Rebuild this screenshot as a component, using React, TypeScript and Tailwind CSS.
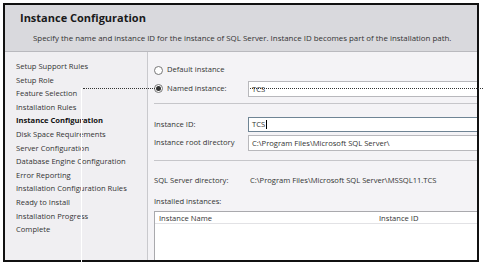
export default function App() {
  const steps = [
    'Setup Support Rules',
    'Setup Role',
    'Feature Selection',
    'Installation Rules',
    'Instance Configuration',
    'Disk Space Requirements',
    'Server Configuration',
    'Database Engine Configuration',
    'Error Reporting',
    'Installation Configuration Rules',
    'Ready to Install',
    'Installation Progress',
    'Complete',
  ]

  return (
    <div className="relative w-[483px] h-[272px] bg-white overflow-hidden text-[#222] font-['Open_Sans',sans-serif]">
      <div className="absolute left-[3px] top-[3px] w-[476px] h-[259px] border-2 border-[#111] flex flex-col bg-[#f2f1f4] overflow-hidden">
        <div className="h-[47px] shrink-0 bg-[#d9d9dd] border-b border-[#b9b9be] pl-[15px] pt-[5px]">
          <div className="text-[11px] font-bold leading-[16px] text-[#1a1a1a]">Instance Configuration</div>
          <div className="text-[7.9px] leading-[12px] mt-[6px] pl-[13px] text-[#333]">
            Specify the name and instance ID for the instance of SQL Server. Instance ID becomes part of the installation path.
          </div>
        </div>
        <div className="flex flex-1 min-h-0">
          <div className="w-[143px] shrink-0 border-r border-[#c9c9cd] bg-[#f0eff2] pl-[11px] pt-[8px] flex flex-col">
            {steps.map((s) => (
              <div
                key={s}
                className={`text-[7.6px] leading-[13.6px] ${s === 'Instance Configuration' ? 'font-bold text-[#111]' : 'text-[#333]'}`}
              >
                {s}
              </div>
            ))}
          </div>
          <div className="flex-1 min-w-0 flex flex-col bg-[#f4f3f6] pl-[6px] pt-[11px] text-[7.6px] text-[#333]">
            <div className="flex items-center gap-[4px] h-[14px]">
              <span className="w-[9px] h-[9px] rounded-full border border-[#777] bg-white" />
              <span>Default instance</span>
            </div>
            <div className="flex items-center h-[17px] mt-[3px]">
              <div className="w-[94px] flex items-center gap-[4px]">
                <span className="w-[9px] h-[9px] rounded-full border border-[#777] bg-white flex items-center justify-center">
                  <span className="w-[5px] h-[5px] rounded-full bg-[#333]" />
                </span>
                <span>Named instance:</span>
              </div>
              <div className="flex-1 h-[16px] border border-[#b8b8bc] border-r-0 bg-white pl-[3px] leading-[14px]">TCS</div>
            </div>
            <div className="border-t border-[#c6c6ca] mt-[6px]" />
            <div className="flex items-center h-[15px] mt-[13px]">
              <div className="w-[94px]">Instance ID:</div>
              <div className="flex-1 h-[15px] border border-[#6f8494] border-r-0 bg-white pl-[3px] leading-[13px]">
                TCS<span className="inline-block w-px h-[9px] bg-black align-middle ml-px" />
              </div>
            </div>
            <div className="flex items-center h-[16px] mt-[3px]">
              <div className="w-[94px]">Instance root directory</div>
              <div className="flex-1 h-[16px] border border-[#b8b8bc] border-r-0 bg-white pl-[3px] leading-[14px]">
                C:\Program Files\Microsoft SQL Server\
              </div>
            </div>
            <div className="border-t border-[#c6c6ca] mt-[9px]" />
            <div className="flex items-center h-[14px] mt-[13px]">
              <div className="w-[96px]">SQL Server directory:</div>
              <div>C:\Program Files\Microsoft SQL Server\MSSQL11.TCS</div>
            </div>
            <div className="h-[14px] leading-[14px] mt-[6px]">Installed instances:</div>
            <div className="mt-[3px] flex-1 border border-b-0 border-[#a9a9ad] border-r-0 bg-white">
              <div className="flex h-[12px] leading-[12px] border-b border-[#e2e2e5]">
                <div className="w-[220px] pl-[4px]">Instance Name</div>
                <div className="pl-[4px]">Instance ID</div>
              </div>
            </div>
          </div>
        </div>
      </div>
      <div className="absolute left-[81px] top-[88px] w-px h-[184px] bg-white" />
      <div className="absolute left-[83px] top-[88px] w-[72px] border-t border-dotted border-[#333]" />
      <div className="absolute left-[250px] top-[88px] w-[233px] border-t border-dotted border-[#333]" />
    </div>
  )
}
